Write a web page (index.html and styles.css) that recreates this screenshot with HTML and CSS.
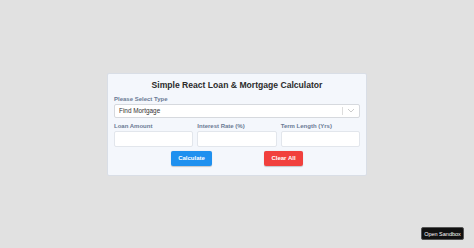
FILE: index.html
```html
<!DOCTYPE html>
<html>
<head>
<meta charset="utf-8">
<link rel="stylesheet" href="styles.css">
</head>
<body>
<div class="page">
  <div class="card">
    <h1 class="title">Simple React Loan &amp; Mortgage Calculator</h1>
    <label class="label">Please Select Type</label>
    <div class="select">
      <span class="select-value">Find Mortgage</span>
      <span class="select-sep"></span>
      <svg class="select-arrow" width="8" height="5" viewBox="0 0 8 5"><path d="M1 1 L4 4 L7 1" fill="none" stroke="#ccc" stroke-width="1"/></svg>
    </div>
    <div class="fields">
      <div class="field">
        <label class="label">Loan Amount</label>
        <input class="input" type="text">
      </div>
      <div class="field">
        <label class="label">Interest Rate (%)</label>
        <input class="input" type="text">
      </div>
      <div class="field">
        <label class="label">Term Length (Yrs)</label>
        <input class="input" type="text">
      </div>
    </div>
    <div class="actions">
      <button class="btn btn-blue">Calculate</button>
      <button class="btn btn-red">Clear All</button>
    </div>
  </div>
</div>
<button class="sandbox">Open Sandbox</button>
</body>
</html>
```

FILE: styles.css
```css
html, body {
  margin: 0;
  padding: 0;
  height: 100%;
}
body {
  background: #e1e1e1;
  font-family: "Liberation Sans", Arial, sans-serif;
}
.page {
  height: 100%;
  display: flex;
  align-items: center;
  justify-content: center;
}
.card {
  width: 246px;
  padding: 5px 6px 9px;
  background: #f4f7fc;
  border: 1px solid #d9dee6;
  border-radius: 2px;
  box-sizing: content-box;
}
.title {
  margin: 0 0 4px;
  text-align: center;
  font-size: 8.6px;
  font-weight: bold;
  color: #2b2b2b;
  line-height: 12px;
}
.label {
  display: block;
  font-size: 6px;
  font-weight: bold;
  color: #6a7a94;
  line-height: 8px;
  margin-bottom: 1px;
}
.select {
  height: 14px;
  box-sizing: border-box;
  background: #fff;
  border: 1px solid #d6d9de;
  border-radius: 2px;
  display: flex;
  align-items: center;
  padding-left: 4px;
}
.select-value {
  flex: 1;
  font-size: 6.4px;
  color: #333;
}
.select-sep {
  width: 1px;
  height: 8px;
  background: #ddd;
}
.select-arrow {
  margin: 0 4px 0 4px;
}
.fields {
  display: grid;
  grid-template-columns: repeat(3, 1fr);
  gap: 4px;
  margin-top: 4px;
}
.field {
  display: flex;
  flex-direction: column;
}
.input {
  height: 16px;
  box-sizing: border-box;
  border: 1px solid #e2e6ec;
  border-radius: 2px;
  background: #fff;
  padding: 0;
  margin: 0;
  width: 100%;
}
.actions {
  display: flex;
  justify-content: center;
  gap: 52px;
  margin-top: 4px;
}
.btn {
  height: 15px;
  border: none;
  border-radius: 2px;
  color: #fff;
  font-family: "Liberation Sans", Arial, sans-serif;
  font-size: 6px;
  font-weight: bold;
  padding: 0;
}
.btn-blue {
  width: 41px;
  background: #1e90ef;
  box-shadow: 0 0.5px 1px rgba(0,0,0,0.2);
}
.btn-red {
  width: 39px;
  background: #f1403d;
  box-shadow: 0 0.5px 1px rgba(0,0,0,0.2);
}
.sandbox {
  position: absolute;
  right: 10px;
  bottom: 8px;
  width: 43px;
  height: 13px;
  padding: 0;
  background: #111;
  border: 1px solid #555;
  border-radius: 2px;
  color: #fff;
  font-family: "Liberation Sans", Arial, sans-serif;
  font-size: 5.5px;
}
```
